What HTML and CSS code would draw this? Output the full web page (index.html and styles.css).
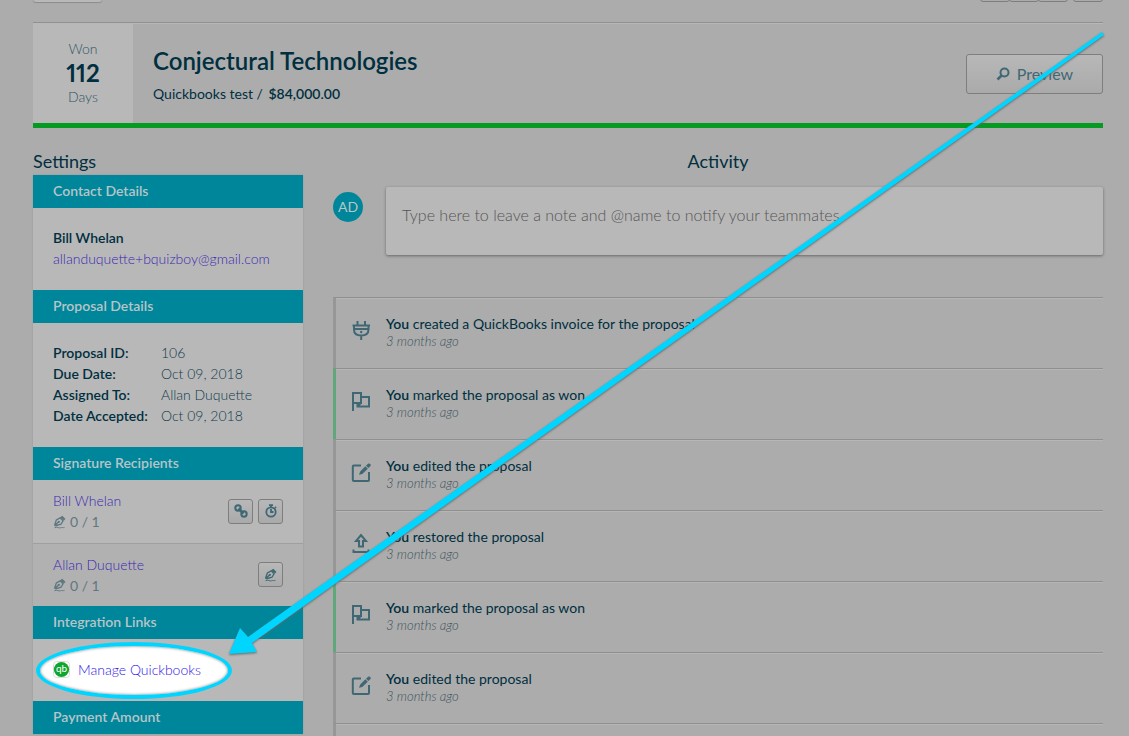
FILE: index.html
```html
<!DOCTYPE html>
<html lang="en">
<head>
    <meta charset="UTF-8">
    <meta name="viewport" content="width=device-width, initial-scale=1.0">
    <title>Conjectural Technologies</title>
    <link rel="stylesheet" href="styles.css">
</head>
<body>
    <!-- shared icons -->
    <svg class="sprite" aria-hidden="true">
        <symbol id="icon-pen" viewBox="0 0 14 14">
            <path d="M8.5 1.4 12.3 5M7.700 2.600 3.600 4.800 1.800 10.200 3 11 8.600 9.400 10.800 5.700ZM2.200 10.600 6 7M9.500.700 13 4.200" fill="none" stroke="currentColor" stroke-width="1.400"/>
            <path d="M1.600 13.200C5 11.600 6 14.200 8.200 13.200 9.600 12.500 11 13.500 12.400 12.800" fill="none" stroke="currentColor"/>
            <circle cx="6.300" cy="6.800" r="1.200" fill="currentColor"/>
        </symbol>
        <symbol id="icon-flag" viewBox="0 0 20 20">
            <path d="M2 20V2h8v10H2M10 6h8v9.500H6.500V12M6 15.500l4-3.500" fill="none" stroke="currentColor" stroke-width="2"/>
        </symbol>
        <symbol id="icon-edit" viewBox="0 0 20 20">
            <path d="M10 3.500H2.800A1 1 0 0 0 1.800 4.500V18a1 1 0 0 0 1 1H17a1 1 0 0 0 1-1V10" fill="none" stroke="currentColor" stroke-width="2"/>
            <path d="M8 12.800 9.200 9.500 14.400 4.300 16.800 6.700 11.300 11.900ZM15 3.700 17.300 1.600Q18.300 1.100 19.200 2T19.500 4L17.400 6.100Z" fill="currentColor"/>
        </symbol>
    </svg>

    <div class="page">
        <div class="toolbar">
            <button class="tool wide" type="button" aria-label="Back"></button>
            <div class="tool-group">
                <button class="tool" type="button" aria-label="Edit"></button>
                <button class="tool" type="button" aria-label="Copy"></button>
                <button class="tool" type="button" aria-label="Archive"></button>
            </div>
            <button class="tool single" type="button" aria-label="More"></button>
        </div>

        <header class="proposal">
            <div class="status">
                <span>Won</span>
                <strong>112</strong>
                <span>Days</span>
            </div>
            <div class="summary">
                <h1>Conjectural Technologies</h1>
                <p>Quickbooks test / <strong>$84,000.00</strong></p>
            </div>
            <button class="preview" type="button">
                <svg width="14" height="14" viewBox="0 0 14 14"><circle cx="8.500" cy="5.500" r="4" fill="none" stroke="currentColor" stroke-width="2"/><path d="M5.700 8.300 1.500 12.500" stroke="currentColor" stroke-width="2.600"/></svg>
                Preview
            </button>
        </header>

        <main>
            <aside>
                <h2>Settings</h2>
                <div class="panel">
                    <h3>Contact Details</h3>
                    <div class="details">
                        <strong>Bill Whelan</strong><br>
                        <a href="#">allanduquette+bquizboy@gmail.com</a>
                    </div>

                    <h3>Proposal Details</h3>
                    <dl class="details">
                        <dt>Proposal ID:</dt><dd>106</dd>
                        <dt>Due Date:</dt><dd>Oct 09, 2018</dd>
                        <dt>Assigned To:</dt><dd>Allan Duquette</dd>
                        <dt>Date Accepted:</dt><dd>Oct 09, 2018</dd>
                    </dl>

                    <h3>Signature Recipients</h3>
                    <div class="recipient">
                        <div class="person">
                            <a href="#">Bill Whelan</a>
                            <span class="signed"><svg width="13" height="14"><use href="#icon-pen"/></svg>0 / 1</span>
                        </div>
                        <button class="icon-button" type="button" aria-label="Copy link">
                            <svg width="14" height="14" viewBox="0 0 14 14" fill="none" stroke="currentColor" stroke-width="2"><circle cx="4" cy="4" r="2.700"/><circle cx="10" cy="10" r="2.700"/><path d="m4.500 4.500 5 5" stroke-width="2.500"/></svg>
                        </button>
                        <button class="icon-button" type="button" aria-label="Remind">
                            <svg width="14" height="14" viewBox="0 0 14 14" fill="none" stroke="currentColor" stroke-width="1.800"><circle cx="7" cy="8" r="4.700"/><path d="M7 5v3h2.500M5 1.200h4M7 1v2.500M11 3l1 1"/></svg>
                        </button>
                    </div>
                    <div class="recipient alt">
                        <div class="person">
                            <a href="#">Allan Duquette</a>
                            <span class="signed"><svg width="13" height="14"><use href="#icon-pen"/></svg>0 / 1</span>
                        </div>
                        <button class="icon-button" type="button" aria-label="Sign">
                            <svg width="13" height="14"><use href="#icon-pen"/></svg>
                        </button>
                    </div>

                    <h3>Integration Links</h3>
                    <div class="integration">
                        <a href="#">
                            <svg width="17" height="17" viewBox="0 0 17 17"><rect x=".5" y=".5" width="16" height="16" rx="3" fill="#fff" stroke="#ddd"/><circle cx="8.500" cy="8.500" r="7.600" fill="#10a52c"/><text x="8.500" y="11.300" text-anchor="middle" class="qb">qb</text></svg>
                            Manage Quickbooks
                        </a>
                    </div>

                    <h3>Payment Amount</h3>
                </div>
            </aside>

            <section class="activity">
                <h2>Activity</h2>
                <form class="note">
                    <span class="avatar">AD</span>
                    <textarea aria-label="Note" placeholder="Type here to leave a note and @name to notify your teammates"></textarea>
                </form>
                <ul class="feed">
                    <li>
                        <svg width="20" height="20" viewBox="0 0 20 20" fill="none" stroke="currentColor" stroke-width="2"><path d="M6.500 1v4M14 1v4M1.500 5.500h17.500M3 9h14.500M3 5.500v4c0 4 3 6 7.200 6s7.300-2 7.300-6v-4M10.200 15v5"/><circle cx="10.200" cy="12" r="1.200" fill="currentColor" stroke="none"/></svg>
                        <div><p><b>You</b> created a QuickBooks invoice for the proposal</p><time>3 months ago</time></div>
                    </li>
                    <li class="won">
                        <svg width="20" height="20"><use href="#icon-flag"/></svg>
                        <div><p><b>You</b> marked the proposal as won</p><time>3 months ago</time></div>
                    </li>
                    <li>
                        <svg width="20" height="20"><use href="#icon-edit"/></svg>
                        <div><p><b>You</b> edited the proposal</p><time>3 months ago</time></div>
                    </li>
                    <li>
                        <svg width="20" height="20" viewBox="0 0 20 20" fill="none" stroke="currentColor" stroke-width="2"><path d="M8 13.500V8H5l5-6 5 6h-3v5.500ZM2.500 16.500V19h15v-2.500"/></svg>
                        <div><p><b>You</b> restored the proposal</p><time>3 months ago</time></div>
                    </li>
                    <li class="won">
                        <svg width="20" height="20"><use href="#icon-flag"/></svg>
                        <div><p><b>You</b> marked the proposal as won</p><time>3 months ago</time></div>
                    </li>
                    <li>
                        <svg width="20" height="20"><use href="#icon-edit"/></svg>
                        <div><p><b>You</b> edited the proposal</p><time>3 months ago</time></div>
                    </li>
                    <li></li>
                </ul>
            </section>
        </main>
    </div>

    <!-- callout arrow -->
    <svg class="arrow" width="1129" height="736" viewBox="0 0 1129 736" aria-hidden="true">
        <path d="M1102 32 248 637 240 628 229 654 257 652 252 643 1104 35Z"/>
    </svg>
</body>
</html>
```

FILE: styles.css
```css
*,
*::before {
    box-sizing: border-box;
}

body {
    margin: 0;
    height: 100vh;
    overflow: hidden;
    position: relative;
    background: #acacac;
    color: #002f3f;
    font-family: Lato, "Liberation Sans", sans-serif;
    font-size: 14px;
    line-height: 21px;
}

h1, h2, h3, p, ul, dl, dd {
    margin: 0;
    padding: 0;
}

h1, strong, b, dt {
    font-weight: 600;
}

a {
    color: #3a28b4;
    font-weight: 300;
    text-decoration: none;
}

button {
    font-family: inherit;
    color: #3f6874;
    background: linear-gradient(#b8b8b8, #aaa);
    border: 1px solid #7e7e7e;
    border-radius: 3px;
    padding: 0;
}

svg {
    flex: none;
}

.sprite {
    position: absolute;
    width: 0;
    height: 0;
}

.page {
    padding: 0 26px 0 33px;
}

/* only the lower edge of the toolbar is in view */
.toolbar {
    display: flex;
    align-items: flex-end;
    height: 22px;
    padding-bottom: 20px;
}

.tool {
    width: 30px;
    height: 30px;
    flex: none;
}

.tool.wide {
    width: 69px;
    margin-right: auto;
    background: #b8b8b8;
    border: 0;
    box-shadow: 0 1px 1px #8c8c8c;
}

.tool.single {
    margin-left: 5px;
}

.tool-group {
    display: flex;
}

.tool-group .tool + .tool {
    margin-left: -1px;
}

.proposal {
    display: flex;
    align-items: center;
    height: 106px;
    border-top: 1px solid #919191;
    border-bottom: 5px solid #059a22;
    box-shadow: inset 0 1px #b8b8b8;
}

.status {
    width: 100px;
    align-self: stretch;
    display: flex;
    flex-direction: column;
    justify-content: center;
    text-align: center;
    line-height: 24px;
    background: #b8b8b8;
    color: #2f5563;
    font-weight: 300;
}

.status strong {
    font-size: 24px;
    font-weight: 700;
    font-variant-numeric: proportional-nums;
    color: #002f3f;
}

.summary {
    flex: 1;
    padding-left: 20px;
}

h1 {
    font-size: 24px;
    line-height: 36px;
    margin-bottom: 4px;
}

.summary strong {
    margin-left: 2px;
}

.preview {
    width: 137px;
    height: 40px;
    margin-top: 1px;
    font-size: 16px;
    display: flex;
    align-items: center;
    justify-content: center;
    gap: 7px;
}

main {
    display: flex;
    gap: 30px;
    padding-top: 20px;
}

aside {
    width: 270px;
    flex: none;
}

h2 {
    font-size: 18px;
    font-weight: 400;
    line-height: 27px;
}

.panel {
    background: #b8b8b8;
    box-shadow: 0 0 2px #999;
}

h3 {
    background: #00869a;
    color: #b8c5c8;
    font-size: 14px;
    font-weight: 600;
    line-height: 32px;
    height: 33px;
    padding: 0 20px;
}

.details {
    padding: 19px 20px 21px;
}

dl.details {
    display: grid;
    grid-template-columns: 98px 1fr;
    column-gap: 10px;
}

dd {
    color: #0f3b4a;
    font-weight: 300;
}

.recipient {
    display: flex;
    align-items: center;
    gap: 5px;
    height: 63px;
    padding: 0 20px 1px;
}

.recipient.alt {
    background: #b1b1b1;
    border-top: 1px solid #9f9f9f;
}

.person {
    flex: 1;
}

.person a {
    display: block;
}

.signed {
    display: flex;
    align-items: center;
    gap: 4px;
    color: #5f7780;
}

.icon-button {
    width: 25px;
    height: 25px;
    display: flex;
    align-items: center;
    justify-content: center;
}

.integration {
    position: relative;
    height: 62px;
    padding: 20px;
}

/* highlighted oval around the link */
.integration::before {
    content: "";
    position: absolute;
    left: 3px;
    top: 3px;
    width: 196px;
    height: 57px;
    background: #fff;
    border: 4px solid #00d5ff;
    border-radius: 50%;
    box-shadow: inset 0 0 3px #777;
}

.integration a {
    position: relative;
    display: flex;
    align-items: center;
    gap: 8px;
    color: #3014e8;
}

.qb {
    font-size: 10px;
    font-weight: 400;
    fill: #fff;
}

.activity {
    flex: 1;
}

.activity h2 {
    text-align: center;
}

.note {
    display: flex;
    align-items: flex-start;
    gap: 23px;
    padding-top: 12px;
}

.avatar {
    width: 30px;
    height: 30px;
    margin-top: 5px;
    border-radius: 50%;
    background: #00869a;
    color: #b8c5c8;
    line-height: 30px;
    text-align: center;
}

textarea {
    flex: 1;
    height: 68px;
    padding: 18px 16px;
    border: 0;
    border-radius: 2px;
    resize: none;
    background: #b8b8b8;
    box-shadow: 0 1px 3px #666;
    font-family: inherit;
    font-size: 16px;
    font-weight: 300;
    line-height: 20px;
}

textarea::placeholder {
    color: #555;
}

.feed {
    list-style: none;
    margin-top: 42px;
}

.feed li {
    display: flex;
    gap: 15px;
    height: 71px;
    padding: 15px;
    border-left: 3px solid #979797;
    border-top: 1px solid #8f8f8f;
    box-shadow: inset 0 1px #b6b6b6;
}

.feed .won {
    border-left-color: #61a77c;
}

.feed svg {
    margin-top: 7px;
    color: #3f6874;
}

.feed time {
    display: block;
    font-size: 13px;
    font-weight: 300;
    line-height: 14px;
    font-style: italic;
    color: #3c545e;
}

.arrow {
    position: absolute;
    top: 0;
    left: 0;
    fill: #00d5ff;
    pointer-events: none;
    filter: drop-shadow(0 1px 1px #666);
}
```
